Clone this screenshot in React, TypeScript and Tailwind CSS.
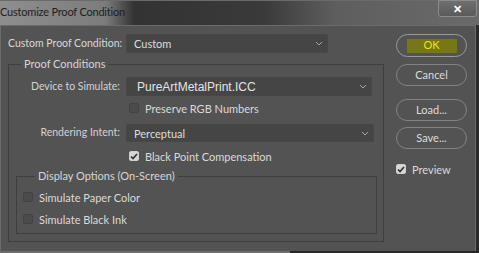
import type { ReactNode } from "react";

const ui = { fontFamily: 'Lato, "Liberation Sans", sans-serif' };

function Chevron() {
  return (
    <svg width="8" height="5" viewBox="0 0 8 5" className="shrink-0">
      <path d="M1 1l3 3 3-3" fill="none" stroke="#a8a8a8" strokeWidth="1" />
    </svg>
  );
}

function Select({ value, className, big }: { value: string; className: string; big?: boolean }) {
  return (
    <div
      className={`flex items-center justify-between rounded-[2px] border border-[#474747] bg-[#454545] pr-[4px] ${className}`}
    >
      {big ? (
        <span
          className="pl-[10px] text-[12px] leading-none text-[#e4e4e4]"
          style={{ fontFamily: '"Liberation Sans", Arial, sans-serif' }}
        >
          {value}
        </span>
      ) : (
        <span className="pl-[7px] text-[11px] leading-none text-[#dedede]">{value}</span>
      )}
      <Chevron />
    </div>
  );
}

function Check({ checked, label }: { checked?: boolean; label: string }) {
  return (
    <div className="flex h-[14px] items-center gap-[6px]">
      <span
        className={`flex h-[10px] w-[10px] shrink-0 items-center justify-center rounded-[2px] border ${
          checked ? "border-[#cfcfcf] bg-[#d6d6d6]" : "border-[#434343] bg-[#4b4b4b]"
        }`}
      >
        {checked ? (
          <svg width="8" height="7" viewBox="0 0 8 7">
            <path d="M1 3.5l2 2 4-4.5" fill="none" stroke="#2e2e2e" strokeWidth="1.6" />
          </svg>
        ) : null}
      </span>
      <span className="whitespace-nowrap text-[11px] leading-none text-[#dadada]">{label}</span>
    </div>
  );
}

function Button({ children }: { children: ReactNode }) {
  return (
    <div className="flex h-[22px] w-[71px] items-center justify-center rounded-full border border-[#828282] text-[11px] text-[#dcdcdc]">
      {children}
    </div>
  );
}

export default function App() {
  return (
    <div className="relative h-[253px] w-[479px] overflow-hidden bg-[#2a2a2a]" style={ui}>
      {/* title bar */}
      <div className="relative h-[25px] border-t border-[#6a6a6a] bg-[linear-gradient(90deg,#8e8e8e_0%,#7c7c7c_22%,#333333_28%,#3a3a3a_55%,#5e5e5e_70%,#6a6a6a_100%)]">
        <span className="absolute left-0 top-[4px] whitespace-nowrap text-[11px] leading-[14px] tracking-[-0.2px] text-[#1e1e1e]">
          Customize Proof Condition
        </span>
        <div className="absolute left-[438px] top-[-1px] flex h-[17px] w-[39px] items-center justify-center rounded-b-[3px] border border-[#8c8c8c] bg-[linear-gradient(180deg,#6f6f6f,#5a5a5a)]">
          <span className="text-[11px] font-bold leading-none text-white">✕</span>
        </div>
      </div>

      {/* body */}
      <div className="flex h-[226px] w-[476px] border-l border-r border-t border-[#6b6b6b] bg-[#535353]">
        <div className="ml-[7px] flex w-[376px] flex-col">
          <div className="mt-[8px] flex h-[19px] items-center">
            <span className="w-[118px] whitespace-nowrap text-[10.5px] text-[#d8d8d8]">Custom Proof Condition:</span>
            <Select value="Custom" className="h-[19px] w-[202px]" />
          </div>

          <fieldset className="mt-[4px] border border-[#3f3f3f]">
            <legend className="ml-[12px] px-[3px] text-[11px] leading-[14px] text-[#d6d6d6]">Proof Conditions</legend>

            <div className="mt-[6px] flex h-[19px] items-center">
              <span className="w-[111px] whitespace-nowrap text-right text-[10.5px] text-[#d2d2d2]">Device to Simulate:</span>
              <Select value="PureArtMetalPrint.ICC" className="ml-[6px] h-[19px] w-[246px]" big />
            </div>
            <div className="ml-[120px] mt-[5px]">
              <Check label="Preserve RGB Numbers" />
            </div>
            <div className="mt-[9px] flex h-[18px] items-center">
              <span className="w-[111px] whitespace-nowrap text-right text-[10.5px] text-[#d2d2d2]">Rendering Intent:</span>
              <Select value="Perceptual" className="ml-[6px] h-[18px] w-[248px]" />
            </div>
            <div className="ml-[120px] mt-[7px]">
              <Check checked label="Black Point Compensation" />
            </div>

            <fieldset className="mb-[7px] ml-[7px] mr-[6px] mt-[6px] border border-[#3f3f3f] pb-[7px] pl-[6px]">
              <legend className="ml-[12px] px-[3px] text-[11px] leading-[14px] text-[#d6d6d6]">
                Display Options (On-Screen)
              </legend>
              <div className="mt-[7px]">
                <Check label="Simulate Paper Color" />
              </div>
              <div className="mt-[8px]">
                <Check label="Simulate Black Ink" />
              </div>
            </fieldset>
          </fieldset>
        </div>

        <div className="ml-[12px] flex flex-col">
          <div className="mt-[8px] flex h-[23px] w-[71px] items-center justify-center rounded-full border border-[#9a9a9a]">
            <span className="flex h-[14px] w-[50px] items-center justify-center bg-[#777714] text-[11px] text-[#e8e800]">
              OK
            </span>
          </div>
          <div className="mt-[7px]">
            <Button>Cancel</Button>
          </div>
          <div className="mt-[13px]">
            <Button>Load...</Button>
          </div>
          <div className="mt-[6px]">
            <Button>Save...</Button>
          </div>
          <div className="mt-[13px]">
            <Check checked label="Preview" />
          </div>
        </div>
      </div>

      <div className="flex h-[2px]">
        <div className="w-[290px] bg-[#6c6c6c]" />
        <div className="flex-1 bg-[#262626]" />
      </div>
    </div>
  );
}
